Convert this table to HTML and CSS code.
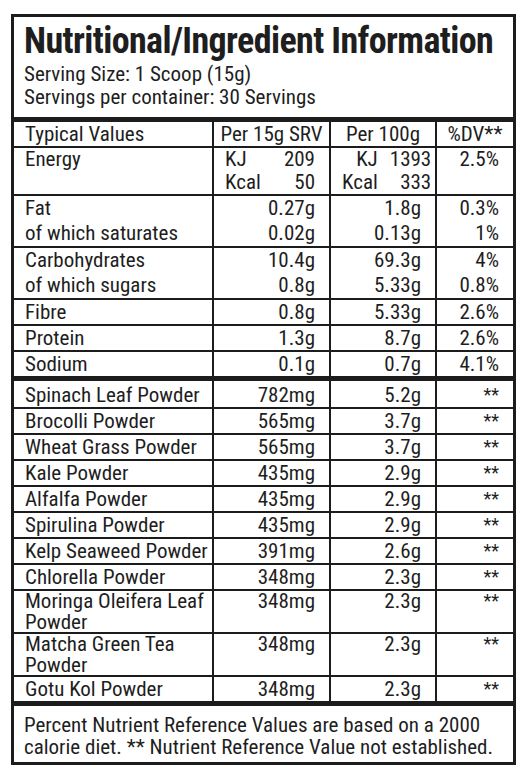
FILE: index.html
```html
<!DOCTYPE html>
<html lang="en">

<head>
    <meta charset="UTF-8">
    <link rel="stylesheet" href="styles.css">
</head>

<body>
    <div class="label">
        <div class="head">
            <h1>Nutritional/Ingredient Information</h1>
            <p>Serving Size: 1 Scoop (15g)</p>
            <p>Servings per container: 30 Servings</p>
        </div>

        <table class="facts">
            <colgroup>
                <col class="c-name">
                <col class="c-srv">
                <col class="c-100">
                <col class="c-dv">
            </colgroup>
            <tr class="top">
                <td>Typical Values</td>
                <td class="mid">Per 15g SRV</td>
                <td class="mid">Per 100g</td>
                <td class="mid">%DV**</td>
            </tr>
            <tr class="energy">
                <td>Energy</td>
                <td>
                    <div class="pair">
                        <span>KJ</span><span>209</span>
                        <span>Kcal</span><span>50</span>
                    </div>
                </td>
                <td>
                    <div class="pair right">
                        <span>KJ</span><span>1393</span>
                        <span>Kcal</span><span>333</span>
                    </div>
                </td>
                <td class="num">2.5%</td>
            </tr>
            <tr class="double">
                <td>Fat<br>of which saturates</td>
                <td class="num">0.27g<br>0.02g</td>
                <td class="num">1.8g<br>0.13g</td>
                <td class="num">0.3%<br>1%</td>
            </tr>
            <tr class="double">
                <td>Carbohydrates<br>of which sugars</td>
                <td class="num">10.4g<br>0.8g</td>
                <td class="num">69.3g<br>5.33g</td>
                <td class="num">4%<br>0.8%</td>
            </tr>
            <tr>
                <td>Fibre</td>
                <td class="num">0.8g</td>
                <td class="num">5.33g</td>
                <td class="num">2.6%</td>
            </tr>
            <tr>
                <td>Protein</td>
                <td class="num">1.3g</td>
                <td class="num">8.7g</td>
                <td class="num">2.6%</td>
            </tr>
            <tr>
                <td>Sodium</td>
                <td class="num">0.1g</td>
                <td class="num">0.7g</td>
                <td class="num">4.1%</td>
            </tr>

            <tr class="split">
                <td>Spinach Leaf Powder</td>
                <td class="num">782mg</td>
                <td class="num">5.2g</td>
                <td class="num star">**</td>
            </tr>
            <tr>
                <td>Brocolli Powder</td>
                <td class="num">565mg</td>
                <td class="num">3.7g</td>
                <td class="num star">**</td>
            </tr>
            <tr>
                <td>Wheat Grass Powder</td>
                <td class="num">565mg</td>
                <td class="num">3.7g</td>
                <td class="num star">**</td>
            </tr>
            <tr>
                <td>Kale Powder</td>
                <td class="num">435mg</td>
                <td class="num">2.9g</td>
                <td class="num star">**</td>
            </tr>
            <tr>
                <td>Alfalfa Powder</td>
                <td class="num">435mg</td>
                <td class="num">2.9g</td>
                <td class="num star">**</td>
            </tr>
            <tr>
                <td>Spirulina Powder</td>
                <td class="num">435mg</td>
                <td class="num">2.9g</td>
                <td class="num star">**</td>
            </tr>
            <tr>
                <td>Kelp Seaweed Powder</td>
                <td class="num">391mg</td>
                <td class="num">2.6g</td>
                <td class="num star">**</td>
            </tr>
            <tr>
                <td>Chlorella Powder</td>
                <td class="num">348mg</td>
                <td class="num">2.3g</td>
                <td class="num star">**</td>
            </tr>
            <tr class="wrap">
                <td>Moringa Oleifera Leaf<br>Powder</td>
                <td class="num">348mg</td>
                <td class="num">2.3g</td>
                <td class="num star">**</td>
            </tr>
            <tr class="wrap">
                <td>Matcha Green Tea<br>Powder</td>
                <td class="num">348mg</td>
                <td class="num">2.3g</td>
                <td class="num star">**</td>
            </tr>
            <tr>
                <td>Gotu Kol Powder</td>
                <td class="num">348mg</td>
                <td class="num">2.3g</td>
                <td class="num star">**</td>
            </tr>
        </table>

        <div class="note">
            Percent Nutrient Reference Values are based on a 2000 calorie diet. ** Nutrient Reference Value not established.
        </div>
    </div>
</body>

</html>
```

FILE: styles.css
```css
body,
html {
    margin: 0;
    background: #fff;
}

body {
    padding: 14px 10px 0 11px;
    font-family: "Roboto Condensed", "Liberation Sans Narrow", Roboto, sans-serif;
    color: #1e1e1e;
}

.label {
    width: 499px;
    border: 3px solid #1c1c1c;
}

.head {
    padding: 2px 10px 8px 10px;
    border-bottom: 5px solid #1c1c1c;
}

.head h1 {
    margin: 0;
    font-size: 36px;
    line-height: 44px;
    font-weight: 700;
    letter-spacing: -0.6px;
}

.head p {
    margin: 0;
    font-size: 21px;
    line-height: 23px;
}

.facts {
    width: 100%;
    border-collapse: collapse;
    table-layout: fixed;
    font-size: 21px;
}

.c-name {
    width: 199px;
}

.c-srv {
    width: 117px;
}

.c-100 {
    width: 106px;
}

.facts td {
    border: 2px solid #1c1c1c;
    padding: 0 14px 0 11px;
    line-height: 24px;
    vertical-align: top;
    white-space: nowrap;
}

.facts tr:first-child td {
    border-top: none;
}

.facts td:first-child {
    border-left: none;
}

.facts td:last-child {
    border-right: none;
}

.facts tr:last-child td {
    border-bottom: 5px solid #1c1c1c;
}

.facts .mid {
    text-align: center;
    padding: 0 4px;
}

.facts .num {
    text-align: right;
}

.facts .star {
    font-size: 18px;
}

.energy td {
    line-height: 23px;
}

.double td {
    line-height: 25px;
}

.wrap td {
    line-height: 20.5px;
}

.split td {
    border-top: 5px solid #1c1c1c;
    padding-top: 2px;
}

.pair {
    display: grid;
    grid-template-columns: auto auto;
    justify-content: space-between;
}

.pair span:nth-child(even) {
    text-align: right;
}

.pair.right {
    grid-template-columns: auto 1fr;
    column-gap: 12px;
}

.pair.right span {
    text-align: right;
}

.note {
    padding: 8px 10px 4px 10px;
    font-size: 21px;
    line-height: 22px;
}
```
